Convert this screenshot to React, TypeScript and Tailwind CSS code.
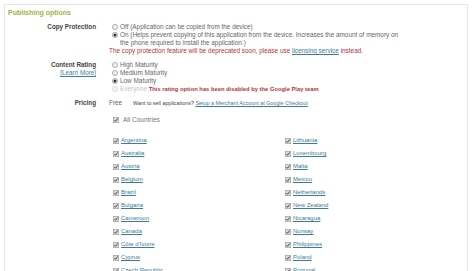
import type { ReactNode } from "react";

const leftCountries = [
  "Argentina",
  "Australia",
  "Austria",
  "Belgium",
  "Brazil",
  "Bulgaria",
  "Cameroon",
  "Canada",
  "Côte d'Ivoire",
  "Cyprus",
  "Czech Republic"
];

const rightCountries = [
  "Lithuania",
  "Luxembourg",
  "Malta",
  "Mexico",
  "Netherlands",
  "New Zealand",
  "Nicaragua",
  "Norway",
  "Philippines",
  "Poland",
  "Portugal"
];

function Radio({ checked = false, disabled = false }: { checked?: boolean; disabled?: boolean }) {
  return (
    <svg width="6" height="6" viewBox="0 0 6 6" className="shrink-0">
      <circle
        cx="3"
        cy="3"
        r="2.6"
        fill={disabled ? "#f4f4f4" : "#eeeeee"}
        stroke={disabled ? "#d4d4d4" : "#9a9a9a"}
        strokeWidth="0.7"
      />
      {checked && <circle cx="3" cy="3" r="1.5" fill="#333" />}
    </svg>
  );
}

function Checkbox() {
  return (
    <svg width="6" height="6" viewBox="0 0 6 6" className="shrink-0">
      <rect x="0.35" y="0.35" width="5.3" height="5.3" fill="#dcdcdc" stroke="#a0a0a0" strokeWidth="0.7" />
      <path d="M1.4 3.1 L2.5 4.3 L4.7 1.5" fill="none" stroke="#333" strokeWidth="0.9" />
    </svg>
  );
}

function Row({ label, children }: { label: ReactNode; children: ReactNode }) {
  return (
    <div className="grid grid-cols-[91px_1fr] gap-x-[13px]">
      <div className="text-right text-[6.3px] leading-[8px] font-bold text-[#444]">{label}</div>
      <div className="text-[6.4px] leading-[8px] text-[#666]">{children}</div>
    </div>
  );
}

function Option({
  checked,
  disabled,
  children
}: {
  checked?: boolean;
  disabled?: boolean;
  children: ReactNode;
}) {
  return (
    <div className="flex items-start gap-[2px] pl-[3px]">
      <span className="flex h-[8px] items-center">
        <Radio checked={checked} disabled={disabled} />
      </span>
      <div>{children}</div>
    </div>
  );
}

function Country({ name }: { name: string }) {
  return (
    <div className="flex h-[13px] items-center gap-[2px]">
      <Checkbox />
      <a className="text-[6px] text-[#3b7b9b] underline">{name}</a>
    </div>
  );
}

export default function App() {
  return (
    <div
      className="h-[271px] w-[474px] overflow-hidden bg-white pl-[4px] pt-[4px]"
      style={{ fontFamily: '"Liberation Sans", Arial, sans-serif' }}
    >
      <div className="h-[300px] w-[464px] border border-b-0 border-[#e6e6e6] pt-[3px]">
        <h2 className="pl-[3px] text-[7px] leading-[9px] font-bold text-[#a0b447]">Publishing options</h2>

        <div className="mt-[6px] flex flex-col gap-[6px]">
          <Row label="Copy Protection">
            <Option>Off (Application can be copied from the device)</Option>
            <Option checked>
              On (Helps prevent copying of this application from the device. Increases the amount of memory on
              <br />
              the phone required to install the application.)
            </Option>
            <p className="text-[#b8323c]">
              The copy protection feature will be deprecated soon, please use{" "}
              <a className="text-[#3b7b9b] underline">licensing service</a> instead.
            </p>
          </Row>

          <Row
            label={
              <>
                Content Rating
                <br />
                <a className="font-normal text-[#3b7b9b] underline">[Learn More]</a>
              </>
            }
          >
            <Option>High Maturity</Option>
            <Option>Medium Maturity</Option>
            <Option checked>Low Maturity</Option>
            <Option disabled>
              <span className="text-[#c4c4c4]">Everyone</span>{" "}
              <span className="text-[5.8px] font-bold text-[#b8323c]">
                This rating option has been disabled by the Google Play team
              </span>
            </Option>
          </Row>

          <Row label="Pricing">
            <div className="flex items-center">
              <span className="w-[24px]">Free</span>
              <span className="text-[5.4px] text-[#444]">
                Want to sell applications?{" "}
                <a className="text-[#3b7b9b] underline">Setup a Merchant Account at Google Checkout</a>
              </span>
            </div>
          </Row>
        </div>

        <div className="mt-[9px] pl-[108px]">
          <div className="flex items-center gap-[4px] text-[6.5px] leading-[8px] text-[#777]">
            <Checkbox />
            All Countries
          </div>
          <div className="mt-[10px] grid grid-cols-[172px_1fr]">
            <div>
              {leftCountries.map((name) => (
                <Country key={name} name={name} />
              ))}
            </div>
            <div>
              {rightCountries.map((name) => (
                <Country key={name} name={name} />
              ))}
            </div>
          </div>
        </div>
      </div>
    </div>
  );
}
